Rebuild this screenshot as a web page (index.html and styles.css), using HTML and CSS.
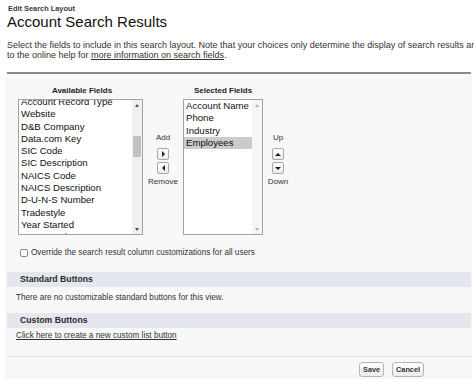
FILE: index.html
```html
<!DOCTYPE html>
<html lang="en">
<head>
  <meta charset="UTF-8">
  <meta name="viewport" content="width=device-width, initial-scale=1.0">
  <title>Edit Search Layout</title>
  <link rel="stylesheet" href="styles.css">
</head>
<body>
  <div class="page">
    <div class="crumb">Edit Search Layout</div>
    <h1 class="title">Account Search Results</h1>
    <p class="intro">Select the fields to include in this search layout. Note that your choices only determine the display of search results and not how they are searched. Refer<br>to the online help for <a href="#">more information on search fields</a>.</p>

    <div class="panel">
      <div class="picker">
        <!-- available fields -->
        <div class="field-col avail">
          <div class="col-head">Available Fields</div>
          <div class="listbox">
            <div class="items scrolled">
              <div>Account Record Type</div>
              <div>Website</div>
              <div>D&amp;B Company</div>
              <div>Data.com Key</div>
              <div>SIC Code</div>
              <div>SIC Description</div>
              <div>NAICS Code</div>
              <div>NAICS Description</div>
              <div>D-U-N-S Number</div>
              <div>Tradestyle</div>
              <div>Year Started</div>
              <div>Account Site</div>
            </div>
            <div class="scrollbar">
              <div class="arrow up"></div>
              <div class="track"><div class="thumb"></div></div>
              <div class="arrow down"></div>
            </div>
          </div>
        </div>

        <div class="movers mv-add">
          <span>Add</span>
          <button class="mover first"><i class="tri right"></i></button>
          <button class="mover"><i class="tri left"></i></button>
          <span class="below">Remove</span>
        </div>

        <!-- selected fields -->
        <div class="field-col selected">
          <div class="col-head">Selected Fields</div>
          <div class="listbox">
            <div class="items">
              <div>Account Name</div>
              <div>Phone</div>
              <div>Industry</div>
              <div class="on">Employees</div>
            </div>
            <div class="scrollbar idle">
              <div class="arrow up"></div>
              <div class="track"></div>
              <div class="arrow down"></div>
            </div>
          </div>
        </div>

        <div class="movers mv-order">
          <span>Up</span>
          <button class="mover first"><i class="tri up"></i></button>
          <button class="mover"><i class="tri down"></i></button>
          <span class="below">Down</span>
        </div>
      </div>

      <label class="override"><span class="check"></span>Override the search result column customizations for all users</label>

      <div class="section-head">Standard Buttons</div>
      <div class="section-body">There are no customizable standard buttons for this view.</div>

      <div class="section-head">Custom Buttons</div>
      <div class="section-body link-row"><a href="#">Click here to create a new custom list button</a></div>

      <div class="footer">
        <button class="btn">Save</button>
        <button class="btn">Cancel</button>
      </div>
    </div>
  </div>
</body>
</html>
```

FILE: styles.css
```css
body {
  margin: 0;
  font-family: "Liberation Sans", Arial, sans-serif;
  color: #222;
  background: #fff;
  overflow: hidden;
}

.page {
  padding: 4px 0 0 7px;
}

.crumb {
  font-size: 7.4px;
  font-weight: bold;
  line-height: 9px;
  color: #3a3a3a;
  padding-left: 1px;
}

.title {
  margin: 0;
  font-size: 15px;
  font-weight: normal;
  line-height: 17px;
  color: #111;
}

.intro {
  margin: 9.5px 0 12.5px;
  font-size: 9px;
  line-height: 10px;
  white-space: nowrap;
  color: #333;
}

.intro a {
  color: #333;
}

.panel {
  width: 464px;
  background: #f8f8f8;
  border-top: 2px solid #858b98;
  box-shadow: 0 1px 2px rgba(0, 0, 0, 0.12);
}

/* field picker */
.picker {
  display: flex;
  align-items: flex-start;
  padding: 12px 0 0 11px;
}

.field-col {
  display: flex;
  flex-direction: column;
  align-items: center;
}

.col-head {
  font-size: 8px;
  font-weight: bold;
  line-height: 10px;
  margin-bottom: 3px;
  color: #222;
}

.listbox {
  display: flex;
  height: 134px;
  border: 1px solid #a3a3a3;
  background: #fff;
}

.avail .listbox {
  width: 123px;
}

.avail .col-head {
  padding-left: 3px;
}

.selected .listbox {
  width: 78px;
}

.items {
  flex: 1;
  overflow: hidden;
  font-size: 9.6px;
  line-height: 12.3px;
  color: #111;
}

.items div {
  padding-left: 2px;
  white-space: nowrap;
}

.items.scrolled div:first-child {
  margin-top: -4px;
}

.items .on {
  background: #cbcbcb;
}

.scrollbar {
  width: 10px;
  display: flex;
  flex-direction: column;
  background: #f0f0f0;
}

.arrow {
  height: 10px;
  display: flex;
  align-items: center;
  justify-content: center;
}

.arrow::before {
  content: "";
  border-left: 2.5px solid transparent;
  border-right: 2.5px solid transparent;
}

.arrow.up::before {
  border-bottom: 3px solid #505050;
}

.arrow.down::before {
  border-top: 3px solid #505050;
}

.track {
  flex: 1;
}

.thumb {
  margin: 26px 1px 0;
  height: 21px;
  background: #c1c1c1;
}

.scrollbar.idle {
  background: #f6f6f6;
}

.idle .arrow.up::before {
  border-bottom-color: #b4b4b4;
}

.idle .arrow.down::before {
  border-top-color: #b4b4b4;
}

/* add / remove, up / down */
.movers {
  display: flex;
  flex-direction: column;
  align-items: center;
  margin-top: 47px;
  font-size: 8px;
  line-height: 10px;
  color: #333;
}

.mv-add {
  width: 40px;
}

.mv-order {
  width: 30px;
}

.mover {
  width: 12px;
  height: 12px;
  padding: 0;
  margin-top: 2px;
  box-sizing: border-box;
  border: 1px solid #a8a8a8;
  border-radius: 2px;
  background: linear-gradient(#ffffff, #ebebeb);
  display: flex;
  align-items: center;
  justify-content: center;
}

.mover.first {
  margin-top: 5px;
}

.movers .below {
  margin-top: 3px;
}

.tri {
  display: block;
  width: 0;
  height: 0;
}

.tri.right {
  border-left: 3.5px solid #1e1e1e;
  border-top: 3px solid transparent;
  border-bottom: 3px solid transparent;
  margin-left: 1px;
}

.tri.left {
  border-right: 3.5px solid #1e1e1e;
  border-top: 3px solid transparent;
  border-bottom: 3px solid transparent;
}

.tri.up {
  border-bottom: 3.5px solid #1e1e1e;
  border-left: 3.5px solid transparent;
  border-right: 3.5px solid transparent;
}

.tri.down {
  border-top: 3.5px solid #1e1e1e;
  border-left: 3.5px solid transparent;
  border-right: 3.5px solid transparent;
}

/* override checkbox */
.override {
  display: flex;
  align-items: center;
  gap: 3px;
  margin: 13px 0 0 13px;
  font-size: 8.2px;
  line-height: 10px;
  color: #333;
}

.check {
  width: 8px;
  height: 8px;
  box-sizing: border-box;
  border: 1px solid #8c8c8c;
  border-radius: 2px;
  background: #fff;
}

/* sections */
.section-head {
  margin-top: 14px;
  height: 15px;
  line-height: 15px;
  padding-left: 13px;
  background: #e4e7ee;
  font-size: 8.7px;
  font-weight: bold;
  color: #2a2a2a;
}

.section-body + .section-head {
  margin-top: 0;
}

.section-body {
  padding: 6px 9px 10px;
  font-size: 8.2px;
  line-height: 10px;
  color: #333;
}

.section-body.link-row {
  padding: 3px 9px 15px;
}

.section-body a {
  color: #333;
}

.footer {
  display: flex;
  justify-content: flex-end;
  gap: 8px;
  padding: 5px 47px 2px 0;
  border-top: 1px solid #e2e2e2;
}

.btn {
  height: 15px;
  padding: 0 3px;
  border: 1px solid #b5b5b5;
  border-radius: 3px;
  background: linear-gradient(#ffffff, #ececec);
  font-family: "Liberation Sans", Arial, sans-serif;
  font-size: 7.3px;
  font-weight: bold;
  color: #333;
}
```
